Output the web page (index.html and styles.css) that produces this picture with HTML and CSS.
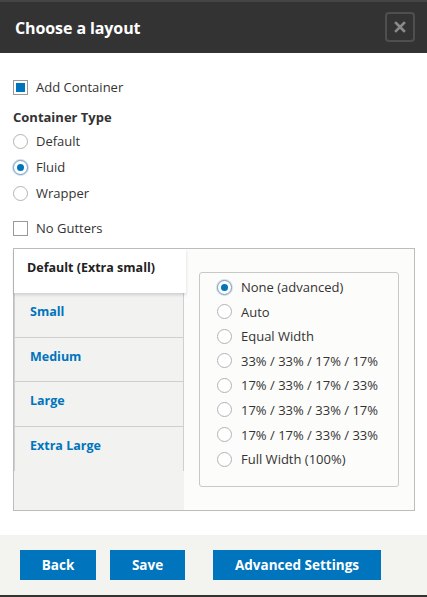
FILE: index.html
```html
<!DOCTYPE html>
<html>
<head>
<meta charset="utf-8">
<link rel="stylesheet" href="styles.css">
</head>
<body>
<div class="dialog">
  <header class="titlebar">
    <h1 class="title">Choose a layout</h1>
    <button class="close" aria-label="Close">
      <svg width="12" height="12" viewBox="0 0 12 12"><path d="M2 2 L10 10 M10 2 L2 10" stroke="#8a8a8a" stroke-width="2.6" stroke-linecap="square"/></svg>
    </button>
  </header>
  <main class="content">
    <label class="check-row first"><span class="checkbox checked"></span>Add Container</label>
    <div class="group-label">Container Type</div>
    <div class="radio-list">
      <label class="radio-row"><span class="radio"></span>Default</label>
      <label class="radio-row"><span class="radio on"></span>Fluid</label>
      <label class="radio-row"><span class="radio"></span>Wrapper</label>
    </div>
    <label class="check-row gutters"><span class="checkbox"></span>No Gutters</label>
    <div class="tabs">
      <ul class="tab-list">
        <li class="tab active">Default (Extra small)</li>
        <li class="tab">Small</li>
        <li class="tab">Medium</li>
        <li class="tab">Large</li>
        <li class="tab last">Extra Large</li>
      </ul>
      <div class="tab-pane">
        <fieldset class="options">
          <label class="opt"><span class="radio on"></span>None (advanced)</label>
          <label class="opt"><span class="radio"></span>Auto</label>
          <label class="opt"><span class="radio"></span>Equal Width</label>
          <label class="opt"><span class="radio"></span>33% / 33% / 17% / 17%</label>
          <label class="opt"><span class="radio"></span>17% / 33% / 17% / 33%</label>
          <label class="opt"><span class="radio"></span>17% / 33% / 33% / 17%</label>
          <label class="opt"><span class="radio"></span>17% / 17% / 33% / 33%</label>
          <label class="opt"><span class="radio"></span>Full Width (100%)</label>
        </fieldset>
      </div>
    </div>
  </main>
  <footer class="footer">
    <button class="btn back">Back</button>
    <button class="btn save">Save</button>
    <button class="btn adv">Advanced Settings</button>
  </footer>
  <div class="bottom-strip"></div>
</div>
</body>
</html>
```

FILE: styles.css
```css
* { box-sizing: border-box; }
html, body { margin: 0; padding: 0; }
body {
  font-family: "Open Sans", "DejaVu Sans", sans-serif;
  color: #333;
  background: #fff;
  width: 427px;
  height: 597px;
  overflow: hidden;
}
.dialog {
  display: flex;
  flex-direction: column;
  height: 597px;
}
.titlebar {
  height: 53px;
  background: #333;
  border-top: 2px solid #454545;
  display: flex;
  align-items: center;
  justify-content: space-between;
  padding: 0 12px 0 15px;
}
.title {
  margin: 0;
  color: #fff;
  font-size: 16px;
  font-weight: 700;
  letter-spacing: -0.1px;
}
.close {
  width: 30px;
  height: 30px;
  border: 2px solid #4f4f4f;
  border-radius: 4px;
  background: transparent;
  padding: 0;
  display: flex;
  align-items: center;
  justify-content: center;
  margin-top: -1px;
}
.content {
  flex: 1;
  padding: 0 13px 0 13px;
}
.check-row {
  display: flex;
  align-items: center;
  font-size: 13px;
  height: 16px;
}
.check-row.first { margin-top: 26px; }
.check-row.gutters { margin-top: 19px; }
.checkbox {
  width: 15px;
  height: 15px;
  border: 1px solid #999;
  background: #fff;
  margin-right: 8px;
  display: flex;
  align-items: center;
  justify-content: center;
}
.checkbox.checked::after {
  content: "";
  width: 9px;
  height: 9px;
  background: #0074bd;
}
.group-label {
  font-size: 13px;
  font-weight: 700;
  margin-top: 13px;
  height: 18px;
  line-height: 18px;
}
.radio-list {
  display: flex;
  flex-direction: column;
  gap: 10px;
  margin-top: 7px;
}
.radio-row {
  display: flex;
  align-items: center;
  font-size: 13px;
  height: 16px;
}
.radio {
  width: 15px;
  height: 15px;
  border-radius: 50%;
  border: 1px solid #b3b3b3;
  background: #fff;
  margin-right: 8px;
  display: flex;
  align-items: center;
  justify-content: center;
  flex: none;
}
.radio.on {
  border-color: #7d9fbf;
  box-shadow: 0 0 0 1px #cfe0ef;
}
.radio.on::after {
  content: "";
  width: 7px;
  height: 7px;
  border-radius: 50%;
  background: #0074bd;
}
.tabs {
  margin-top: 12px;
  border: 1px solid #bdbdbd;
  height: 263px;
  display: flex;
  background: #fcfcfa;
  width: 402px;
}
.tab-list {
  list-style: none;
  margin: 0;
  padding: 0;
  width: 170px;
  background: #f2f2f0;
  flex: none;
}
.tab {
  height: 44.6px;
  padding: 10px 0 0 15px;
  font-size: 12.5px;
  line-height: 17px;
  font-weight: 700;
  color: #0074bd;
  border-left: 1px solid #cfcfcf;
  border-right: 1px solid #cfcfcf;
  border-bottom: 1px solid #cfcfcf;
}
.tab.last { border-bottom: none; }
.tab.active {
  color: #222;
  background: #fff;
  border: none;
  width: 172px;
  height: 44px;
  padding: 10px 0 0 13px;
  box-shadow: 0 2px 3px rgba(0,0,0,0.15);
  position: relative;
  z-index: 1;
}
.tab-pane {
  flex: 1;
  padding: 23px 15px 0 15px;
}
.options {
  margin: 0;
  border: 1px solid #c8c8c8;
  border-radius: 3px;
  height: 215px;
  padding: 6px 0 0 17px;
  display: flex;
  flex-direction: column;
  gap: 8.6px;
  background: #fcfcfa;
}
.opt {
  display: flex;
  align-items: center;
  font-size: 13px;
  height: 16px;
  color: #333;
}
.opt .radio { margin-right: 9px; }
.footer {
  height: 60px;
  background: #f3f3ef;
  display: flex;
  align-items: center;
  padding: 0 0 0 20px;
  gap: 14px;
}
.btn {
  height: 30px;
  background: #0074bd;
  color: #fff;
  border: none;
  font-family: "Open Sans", "DejaVu Sans", sans-serif;
  font-size: 13.5px;
  font-weight: 700;
  padding: 0;
}
.btn.back { width: 76px; }
.btn.save { width: 75px; }
.btn.adv { width: 168px; margin-left: 14px; }
.bottom-strip {
  height: 2px;
  background: #333;
}
```
